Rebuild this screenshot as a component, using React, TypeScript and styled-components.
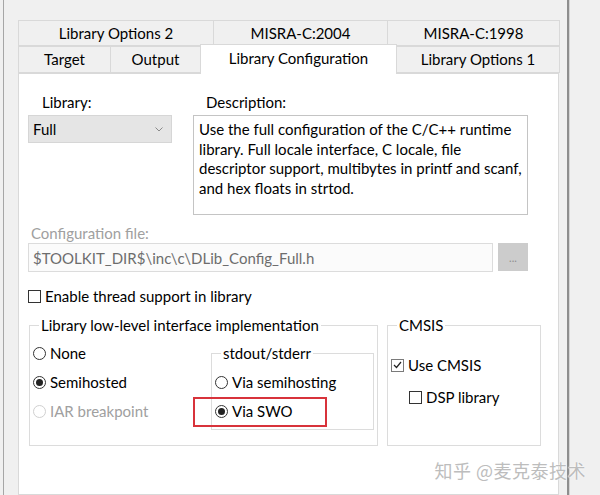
import React from "react";
import styled, { createGlobalStyle } from "styled-components";

const GlobalStyle = createGlobalStyle`
  html, body {
    margin: 0;
    padding: 0;
    background: #f0f0f0;
  }
  body {
    font-family: Lato, "Noto Sans", sans-serif;
    font-size: 15px;
    color: #000;
  }
`;

const Screen = styled.div`
  position: relative;
  width: 600px;
  height: 495px;
  overflow: hidden;
  background: #f0f0f0;
  display: flex;
`;

const Dialog = styled.div`
  margin-left: 3px;
  border-left: 1px solid #a6a6a6;
  border-right: 2px solid #8e8e8e;
  padding: 20px 8px 0 14px;
  width: 541px;
  display: flex;
  flex-direction: column;
`;

const RightEdge = styled.div`
  width: 1px;
  background: #d4d4d4;
`;

const TabRow = styled.div`
  display: flex;
  height: ${(p: { $h: number }) => p.$h}px;
  align-items: flex-end;
`;

const Tab = styled.div<{ $w: number; $active?: boolean }>`
  box-sizing: border-box;
  width: ${(p) => p.$w}px;
  height: ${(p) => (p.$active ? "calc(100% + 3px)" : "100%")};
  margin-bottom: ${(p) => (p.$active ? "-1px" : "0")};
  display: flex;
  align-items: center;
  justify-content: center;
  background: ${(p) => (p.$active ? "#fff" : "#f0f0f0")};
  border: 1px solid #d9d9d9;
  border-bottom: ${(p) => (p.$active ? "none" : "1px solid #d9d9d9")};
  margin-right: -1px;
  position: relative;
  z-index: ${(p) => (p.$active ? 2 : 1)};
  padding-bottom: ${(p) => (p.$active ? "4px" : "1px")};
  white-space: nowrap;
`;

const Panel = styled.div`
  flex: 1;
  background: #fff;
  border: 1px solid #d9d9d9;
  padding: 18px 0 0 9px;
  display: flex;
  flex-direction: column;
`;

const TopSection = styled.div`
  display: flex;
  gap: 21px;
`;

const Column = styled.div<{ $w: number; $indent: number }>`
  width: ${(p) => p.$w}px;
  display: flex;
  flex-direction: column;
  & > label {
    padding-left: ${(p) => p.$indent}px;
  }
`;

const FieldLabel = styled.label<{ $disabled?: boolean; $gap?: number }>`
  display: block;
  line-height: 20px;
  height: 20px;
  margin-bottom: ${(p) => p.$gap ?? 3}px;
  color: ${(p) => (p.$disabled ? "#a0a0a0" : "#000")};
`;

const Select = styled.div`
  box-sizing: border-box;
  height: 28px;
  background: #e5e5e5;
  border: 1px solid #d6d6d6;
  display: flex;
  align-items: center;
  justify-content: space-between;
  padding: 0 8px 0 4px;
`;

const DescriptionBox = styled.div`
  box-sizing: border-box;
  height: 100px;
  border: 1px solid #c4c4c4;
  padding: 4px 5px;
  line-height: 19.5px;
  & > span {
    display: block;
    white-space: nowrap;
  }
`;

const ConfigSection = styled.div`
  margin-top: 8px;
  display: flex;
  flex-direction: column;
  & > label {
    padding-left: 3px;
  }
`;

const InputRow = styled.div`
  display: flex;
  gap: 5px;
  align-items: flex-start;
`;

const PathInput = styled.div`
  box-sizing: border-box;
  width: 465px;
  height: 29px;
  border: 1px solid #dcdcdc;
  background: #fbfbfb;
  color: #6d6d6d;
  display: flex;
  align-items: center;
  padding-left: 4px;
  white-space: nowrap;
`;

const BrowseButton = styled.div`
  box-sizing: border-box;
  width: 30px;
  height: 28px;
  background: #cccccc;
  color: #8f8f8f;
  font-size: 11px;
  display: flex;
  align-items: center;
  justify-content: center;
`;

const CheckRow = styled.div<{ $indent?: number }>`
  display: flex;
  align-items: center;
  height: 20px;
  gap: 4px;
  padding-left: ${(p) => p.$indent || 0}px;
  white-space: nowrap;
`;

const ThreadRow = styled(CheckRow)`
  margin-top: 14px;
`;

const Box = styled.span<{ $checked?: boolean }>`
  box-sizing: border-box;
  width: 13px;
  height: 13px;
  border: 1px solid ${(p) => (p.$checked ? "#7a7a7a" : "#333")};
  background: #fff;
  display: inline-flex;
  align-items: center;
  justify-content: center;
  flex: none;
`;

const Radio = styled.span<{ $checked?: boolean; $disabled?: boolean }>`
  box-sizing: border-box;
  width: 13px;
  height: 13px;
  border-radius: 50%;
  border: 1px solid ${(p) => (p.$disabled ? "#d0d0d0" : "#333")};
  background: #fff;
  display: inline-flex;
  align-items: center;
  justify-content: center;
  flex: none;
  &::after {
    content: "";
    display: ${(p) => (p.$checked ? "block" : "none")};
    width: 7px;
    height: 7px;
    border-radius: 50%;
    background: #222;
  }
`;

const Caption = styled.span<{ $disabled?: boolean }>`
  color: ${(p) => (p.$disabled ? "#a0a0a0" : "#000")};
  line-height: 20px;
`;

const GroupRow = styled.div`
  display: flex;
  gap: 9px;
  margin-top: 9px;
  padding-left: 1px;
`;

const Group = styled.fieldset<{ $w: number; $padBottom?: number }>`
  box-sizing: border-box;
  width: ${(p) => p.$w}px;
  margin: 0;
  border: 1px solid #dcdcdc;
  padding: 0 3px ${(p) => p.$padBottom ?? 15}px 3px;
  min-width: 0;
`;

const Legend = styled.legend`
  margin-left: 6px;
  padding: 0 2px;
  line-height: 20px;
  white-space: nowrap;
`;

const GroupBody = styled.div`
  display: flex;
  justify-content: space-between;
  padding-top: 8px;
`;

const Stack = styled.div<{ $gap: number; $top?: number }>`
  display: flex;
  flex-direction: column;
  gap: ${(p) => p.$gap}px;
  padding-top: ${(p) => p.$top || 0}px;
`;

const Highlighted = styled.div`
  position: relative;
`;

const RedFrame = styled.div`
  position: absolute;
  left: -22px;
  top: -4px;
  width: 134px;
  height: 30px;
  box-sizing: border-box;
  border: 2px solid #d8333b;
  pointer-events: none;
`;

const Watermark = styled.div`
  position: absolute;
  right: 14px;
  top: 457px;
  font-family: "Noto Sans CJK SC", "Noto Sans", sans-serif;
  font-size: 18px;
  color: #bdbdbd;
  letter-spacing: 0.5px;
  text-shadow: 0 0 2px #fff, 0 0 1px #fff;
  white-space: nowrap;
`;

const Chevron = () => (
  <svg width="8" height="5" viewBox="0 0 8 5">
    <path d="M0.5 0.5 L4 4 L7.5 0.5" fill="none" stroke="#8a8a8a" strokeWidth="1" />
  </svg>
);

const Tick = () => (
  <svg width="9" height="8" viewBox="0 0 9 8">
    <path d="M1 4 L3.5 6.5 L8 1" fill="none" stroke="#222" strokeWidth="1.2" />
  </svg>
);

export default function App() {
  return (
    <>
      <GlobalStyle />
      <Screen>
        <Dialog>
          <TabRow $h={26}>
            <Tab $w={196}>Library Options 2</Tab>
            <Tab $w={175}>MISRA-C:2004</Tab>
            <Tab $w={173}>MISRA-C:1998</Tab>
          </TabRow>
          <TabRow $h={27}>
            <Tab $w={93}>Target</Tab>
            <Tab $w={91}>Output</Tab>
            <Tab $w={197} $active>
              Library Configuration
            </Tab>
            <Tab $w={164}>Library Options 1</Tab>
          </TabRow>
          <Panel>
            <TopSection>
              <Column $w={144} $indent={14}>
                <FieldLabel>Library:</FieldLabel>
                <Select>
                  <span>Full</span>
                  <Chevron />
                </Select>
              </Column>
              <Column $w={335} $indent={13}>
                <FieldLabel>Description:</FieldLabel>
                <DescriptionBox>
                  <span>Use the full configuration of the C/C++ runtime</span>
                  <span>library. Full locale interface, C locale, file</span>
                  <span>descriptor support, multibytes in printf and scanf,</span>
                  <span>and hex floats in strtod.</span>
                </DescriptionBox>
              </Column>
            </TopSection>

            <ConfigSection>
              <FieldLabel $disabled $gap={0}>
                Configuration file:
              </FieldLabel>
              <InputRow>
                <PathInput>$TOOLKIT_DIR$\inc\c\DLib_Config_Full.h</PathInput>
                <BrowseButton>...</BrowseButton>
              </InputRow>
            </ConfigSection>

            <ThreadRow>
              <Box />
              <Caption>Enable thread support in library</Caption>
            </ThreadRow>

            <GroupRow>
              <Group $w={349}>
                <Legend>Library low-level interface implementation</Legend>
                <GroupBody>
                  <Stack $gap={9}>
                    <CheckRow>
                      <Radio />
                      <Caption>None</Caption>
                    </CheckRow>
                    <CheckRow>
                      <Radio $checked />
                      <Caption>Semihosted</Caption>
                    </CheckRow>
                    <CheckRow>
                      <Radio $disabled />
                      <Caption $disabled>IAR breakpoint</Caption>
                    </CheckRow>
                  </Stack>
                  <Group $w={163} $padBottom={8}>
                    <Legend>stdout/stderr</Legend>
                    <Stack $gap={9} $top={9}>
                      <CheckRow>
                        <Radio />
                        <Caption>Via semihosting</Caption>
                      </CheckRow>
                      <Highlighted>
                        <CheckRow>
                          <Radio $checked />
                          <Caption>Via SWO</Caption>
                        </CheckRow>
                        <RedFrame />
                      </Highlighted>
                    </Stack>
                  </Group>
                </GroupBody>
              </Group>
              <Group $w={154}>
                <Legend>CMSIS</Legend>
                <Stack $gap={12} $top={20}>
                  <CheckRow>
                    <Box $checked>
                      <Tick />
                    </Box>
                    <Caption>Use CMSIS</Caption>
                  </CheckRow>
                  <CheckRow $indent={18}>
                    <Box />
                    <Caption>DSP library</Caption>
                  </CheckRow>
                </Stack>
              </Group>
            </GroupRow>
          </Panel>
        </Dialog>
        <RightEdge />
        <Watermark>知乎 @麦克泰技术</Watermark>
      </Screen>
    </>
  );
}
